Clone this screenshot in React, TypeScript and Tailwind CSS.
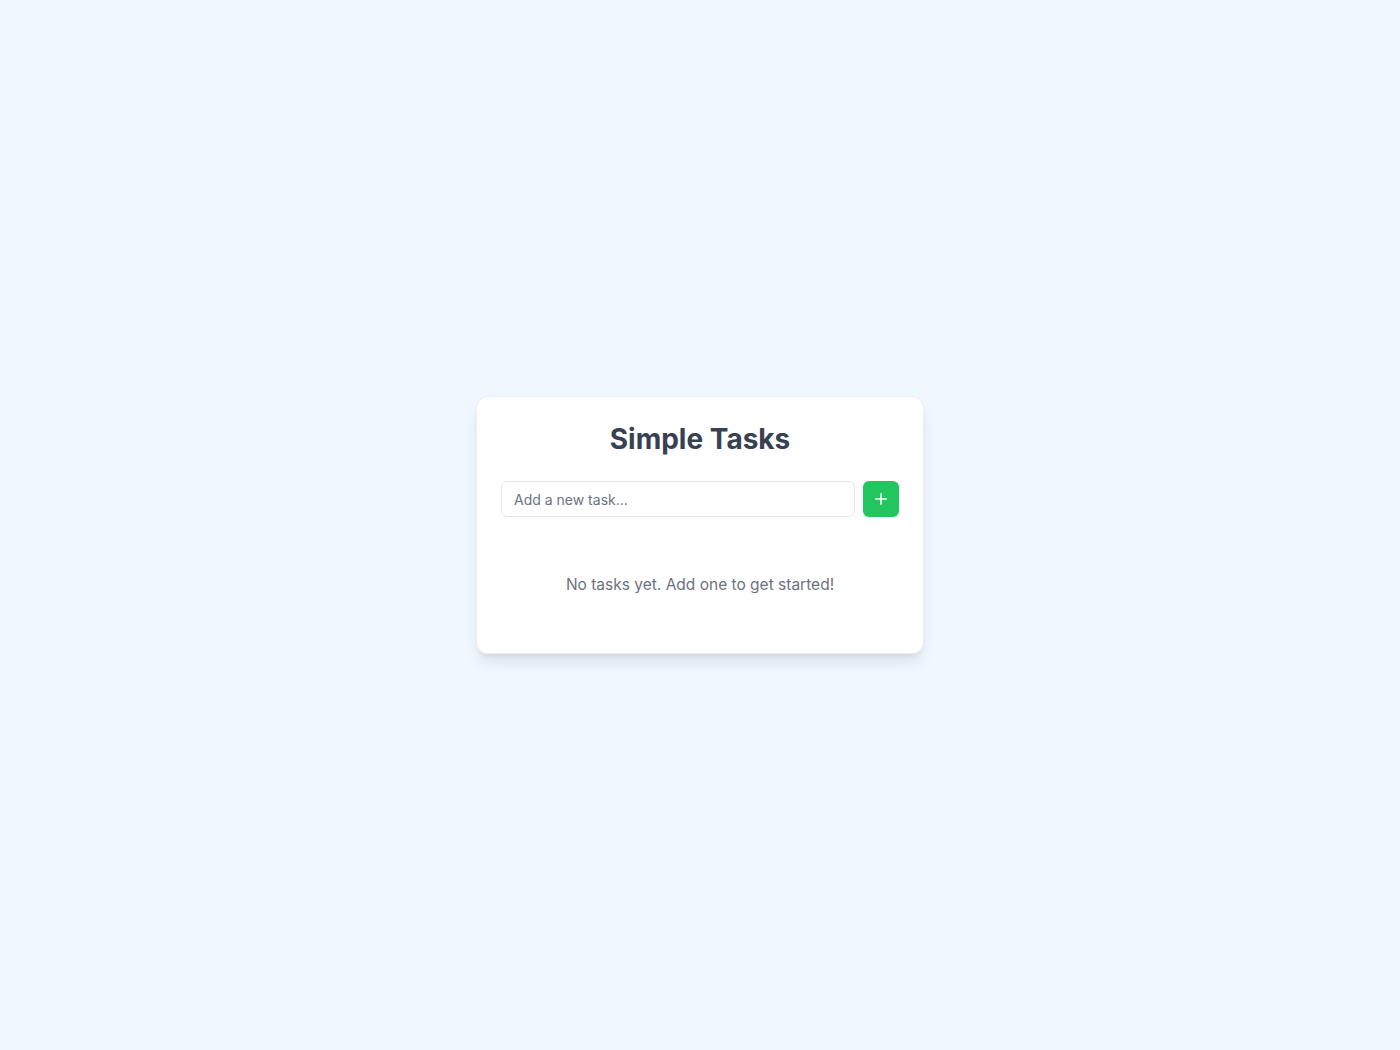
import { Plus } from "lucide-react";

export default function App() {
  return (
    <main
      className="flex min-h-[1050px] items-center justify-center bg-[#f0f7ff]"
      style={{ fontFamily: "Inter, 'Noto Sans', sans-serif" }}
    >
      <div className="w-[448px] rounded-xl border border-[#e5e7eb]/70 bg-white p-6 shadow-lg">
        <h1 className="mb-6 text-center text-[28px] leading-9 font-bold text-[#374151]">
          Simple Tasks
        </h1>
        <div className="flex gap-2">
          <input
            type="text"
            placeholder="Add a new task..."
            className="h-9 grow rounded-md border border-[#e5e7eb] px-3 text-sm text-[#374151] placeholder:text-[#6b7280] outline-none"
          />
          <button className="flex h-9 w-9 items-center justify-center rounded-md bg-[#22c55e] text-white">
            <Plus size={18} />
          </button>
        </div>
        <div className="mt-6">
          <p className="py-8 text-center text-[15.5px] leading-6 text-[#6b7280]">
            No tasks yet. Add one to get started!
          </p>
        </div>
      </div>
    </main>
  );
}
